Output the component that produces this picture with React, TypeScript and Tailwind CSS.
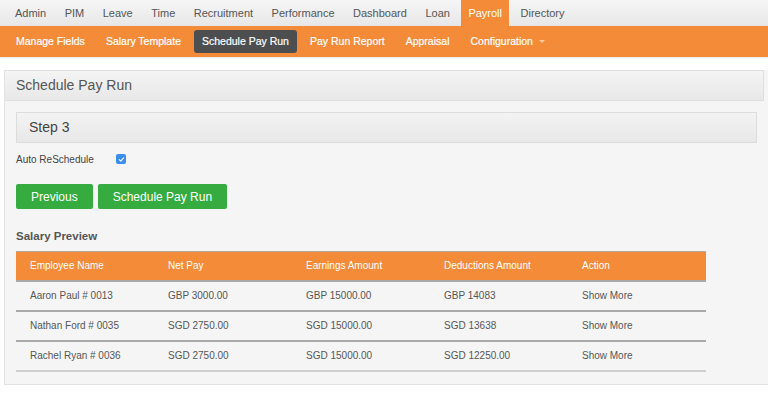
import React from "react";

const topItems = ["Admin", "PIM", "Leave", "Time", "Recruitment", "Performance", "Dashboard", "Loan", "Payroll", "Directory"];
const subItems = ["Manage Fields", "Salary Template", "Schedule Pay Run", "Pay Run Report", "Appraisal", "Configuration"];

const rows = [
  ["Aaron Paul # 0013", "GBP 3000.00", "GBP 15000.00", "GBP 14083", "Show More"],
  ["Nathan Ford # 0035", "SGD 2750.00", "SGD 15000.00", "SGD 13638", "Show More"],
  ["Rachel Ryan # 0036", "SGD 2750.00", "SGD 15000.00", "SGD 12250.00", "Show More"],
];

export default function App() {
  return (
    <div className="w-[768px] h-[399px] overflow-hidden bg-white" style={{ fontFamily: '"Liberation Sans", Arial, sans-serif' }}>
      {/* Top nav */}
      <div className="h-[26px] flex items-stretch pl-[8px] gap-[4.5px] bg-gradient-to-b from-[#f6f6f6] to-[#e7e7e7]">
        {topItems.map((t) => (
          <div
            key={t}
            className={
              "px-[7px] flex items-center text-[11px] " +
              (t === "Payroll" ? "bg-[#f38b38] text-white" : "text-[#555]")
            }
          >
            {t}
          </div>
        ))}
      </div>
      {/* Sub nav */}
      <div className="h-[31px] bg-[#f38b38] flex items-center pl-[8px] gap-[5px] shadow-[0_1px_1px_rgba(0,0,0,0.08)]">
        {subItems.map((t) => (
          <div
            key={t}
            className={
              "h-[23px] px-[8px] flex items-center text-[10.5px] text-white rounded-[3px] " +
              (t === "Schedule Pay Run" ? "bg-[#4c4e50]" : "")
            }
            style={{ WebkitTextStroke: "0.2px white" }}
          >
            {t}
            {t === "Configuration" && (
              <span className="ml-[6px] inline-block w-0 h-0 border-l-[3px] border-r-[3px] border-t-[3px] border-l-transparent border-r-transparent border-t-[#f9c9a0]" />
            )}
          </div>
        ))}
      </div>

      {/* Panel */}
      <div className="pl-[4px] mt-[13px]">
        <div className="border-l border-b border-[#e2e2e2] bg-[#f5f5f5]">
          <div className="h-[31px] mr-[4px] border-t border-r border-b border-[#dedede] bg-gradient-to-b from-[#f4f4f4] to-[#e8e8e8] flex items-center pl-[11px] text-[14px] text-[#555]">
            Schedule Pay Run
          </div>
          <div className="pt-[11px] pl-[11px] pr-[11px] pb-[12px]">
            <div className="h-[31px] border border-[#dcdcdc] bg-gradient-to-b from-[#f3f3f3] to-[#e8e8e8] flex items-center pl-[12px] text-[14px] text-[#444]">
              Step 3
            </div>
            <div className="h-[14px] mt-[9px] flex items-center">
              <span className="w-[100px] text-[10px] text-[#444]">Auto ReSchedule</span>
              <span className="w-[10px] h-[10px] rounded-[2px] bg-[#3a8ef0] flex items-center justify-center">
                <svg width="7" height="7" viewBox="0 0 8 8">
                  <path d="M1.5 4.2 L3.2 5.8 L6.5 2" fill="none" stroke="white" strokeWidth="1.3" strokeLinecap="round" strokeLinejoin="round" />
                </svg>
              </span>
            </div>
            <div className="mt-[18px] flex gap-[5px]">
              <button className="h-[25px] px-[15px] rounded-[2px] bg-[#35ab40] text-white text-[12px]">Previous</button>
              <button className="h-[25px] px-[15px] rounded-[2px] bg-[#35ab40] text-white text-[12px]">Schedule Pay Run</button>
            </div>
            <div className="mt-[20px] h-[14px] leading-[14px] text-[11.5px] font-bold text-[#555]">Salary Preview</div>
            <div className="mt-[8px] w-[690px]">
              <div className="h-[31px] bg-[#f38b38] border-t border-[#b0a8a0] border-b-2 border-b-[#a9a9a9] grid grid-cols-5 items-center text-[10px] text-white">
                {["Employee Name", "Net Pay", "Earnings Amount", "Deductions Amount", "Action"].map((h) => (
                  <div key={h} className="pl-[14px] pb-[1px]">{h}</div>
                ))}
              </div>
              {rows.map((r, i) => (
                <div
                  key={i}
                  className={
                    "h-[30px] grid grid-cols-5 items-center text-[10px] text-[#555] border-b-2 " +
                    (i === rows.length - 1 ? "border-[#cfcfcf]" : "border-[#a9a9a9]")
                  }
                >
                  {r.map((c, j) => (
                    <div key={j} className="pl-[14px] pb-[2px]">{c}</div>
                  ))}
                </div>
              ))}
            </div>
          </div>
        </div>
      </div>
    </div>
  );
}
